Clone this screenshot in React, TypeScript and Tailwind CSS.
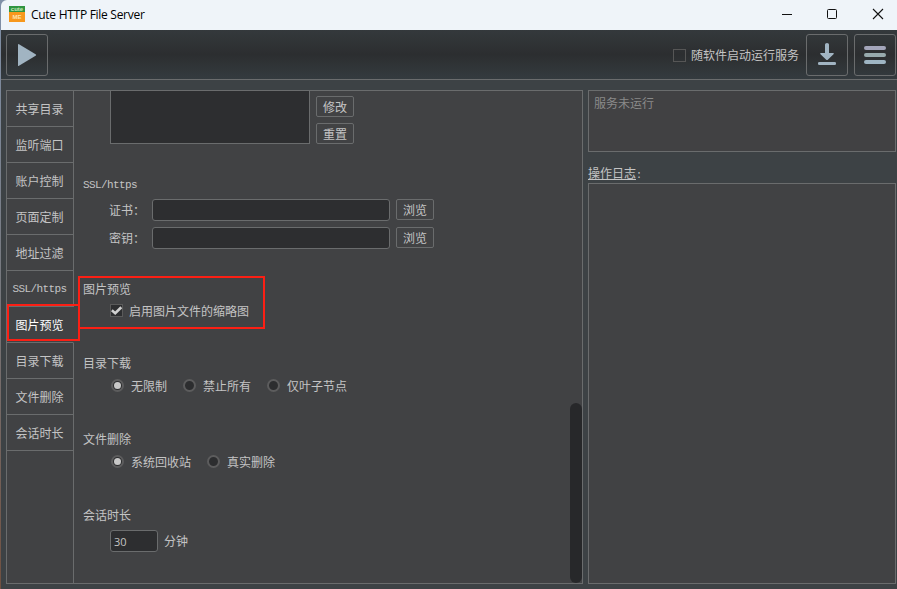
import { useState, type ReactNode } from 'react';
import clsx from 'clsx';

const TABS = [
  '共享目录',
  '监听端口',
  '账户控制',
  '页面定制',
  '地址过滤',
  'SSL/https',
  '图片预览',
  '目录下载',
  '文件删除',
  '会话时长',
];

function AppLogo() {
  return (
    <span className="flex h-4 w-4 flex-col overflow-hidden text-center font-['Liberation_Sans'] text-[6px] font-bold leading-[6px]">
      <span className="h-[6px] bg-[#2f9440] text-[#c5e8b8]">cute</span>
      <span className="h-[10px] bg-[#f7981d] leading-[11px] text-[#fbe3b0]">ME</span>
    </span>
  );
}

function TitleBar() {
  return (
    <header className="flex h-[30px] shrink-0 items-center rounded-tl-[6px] bg-[#eff4f9] pl-2 text-black">
      <div className="-mt-0.5">
        <AppLogo />
      </div>
      <h1 className="ml-[6px] flex-1 font-['Open_Sans'] text-[12px] leading-[30px] tracking-[-0.28px]">
        Cute HTTP File Server
      </h1>
      <svg width="115" height="30" viewBox="0 0 115 30" fill="none" stroke="#111">
        <path d="M0 14.5h10" />
        <rect x="45.5" y="9.5" width="9" height="9" rx="1" />
        <path d="M91 9l10 10M101 9l-10 10" strokeWidth="1.1" />
      </svg>
    </header>
  );
}

function ToolButton({ children }: { children: ReactNode }) {
  return (
    <button className="flex h-[42px] w-[42px] items-center justify-center rounded-[3px] border border-[#6a6c6d]">
      {children}
    </button>
  );
}

function Toolbar() {
  return (
    <div className="flex h-[50px] shrink-0 items-start border-b border-[#6a6c6d] bg-linear-to-b from-[#34393c] via-[#2c2e30] to-[#343b3f] pt-1 pl-[5px] pr-px">
      <ToolButton>
        <svg width="40" height="40" viewBox="0 0 40 40" fill="#a1b4c2">
          <path d="M11 9.600q0-1 1-.4L28.600 19.200q1.200.8 0 1.600L12 30.800q-1 .6-1-.4z" />
        </svg>
      </ToolButton>
      <label className="ml-auto mr-[7px] flex h-[42px] items-center gap-[5px]">
        <span className="h-[13px] w-[13px] border border-[#565656]" />
        <span>随软件启动运行服务</span>
      </label>
      <ToolButton>
        <svg width="40" height="40" viewBox="0 0 40 40" fill="#a1b4c2">
          <path d="M18 9.500q0-1.500 2-1.500t2 1.500V18h4.200q1.300.2.300 1.200l-5.700 5.500q-.8.700-1.600 0l-5.700-5.500q-1-1 .3-1.200H18z" />
          <rect x="11" y="27" width="18" height="3" rx="1.300" />
        </svg>
      </ToolButton>
      <div className="w-[6px]" />
      <ToolButton>
        <svg width="40" height="40" viewBox="0 0 40 40">
          <rect x="9" y="11" width="22" height="4" rx="2" fill="#a3a5ba" />
          <rect x="9" y="18" width="22" height="4" rx="2" fill="#97aaad" />
          <rect x="9" y="25" width="22" height="4" rx="2" fill="#9eb5c3" />
        </svg>
      </ToolButton>
    </div>
  );
}

function Sidebar({ active, onSelect }: { active: string; onSelect: (tab: string) => void }) {
  return (
    <nav className="flex w-[67px] shrink-0 flex-col">
      {TABS.map((tab) => (
        <button
          key={tab}
          onClick={() => onSelect(tab)}
          className={clsx(
            'h-9 shrink-0 border-b border-r border-b-[#6a6c6d] pr-px',
            tab === active ? 'border-r-transparent text-white' : 'border-r-[#6a6c6d]',
            tab === 'SSL/https' && "pt-[2px] font-['Liberation_Mono'] text-[11px] tracking-[-0.6px]",
          )}
        >
          {tab}
        </button>
      ))}
      <div className="flex-1 border-r border-[#6a6c6d]" />
    </nav>
  );
}

function SmallButton({ children }: { children: ReactNode }) {
  return (
    <button className="h-[21px] w-[38px] rounded-[2px] border border-[#6a6c6d] leading-[19px]">
      {children}
    </button>
  );
}

function Radio({ label, checked = false }: { label: string; checked?: boolean }) {
  return (
    <label className="flex h-[15px] items-center gap-[7px]">
      <span className="flex h-[13px] w-[13px] items-center justify-center rounded-full border-2 border-[#5c5c5d] bg-[#2c2d2f]">
        {checked && <span className="h-[7px] w-[7px] rounded-full bg-[#c8c8c8]" />}
      </span>
      <span>{label}</span>
    </label>
  );
}

function FileField({ label }: { label: string }) {
  return (
    <div className="flex h-[22px] items-start">
      <span className="w-[43px] leading-[22px]">{label}：</span>
      <input className="mr-[6px] h-[22px] w-[238px] rounded-[3px] border border-[#6a6c6d] bg-[#2d2e30]" />
      <SmallButton>浏览</SmallButton>
    </div>
  );
}

function Section({ title, className, children }: { title: string; className?: string; children: ReactNode }) {
  return (
    <section className={clsx('pl-[9px]', className)}>
      <h2 className="h-4 leading-4">{title}</h2>
      <div className="pl-[26px]">{children}</div>
    </section>
  );
}

function Settings() {
  return (
    <div className="relative min-w-0 flex-1">
      <div className="flex items-start gap-[6px] pl-9">
        <div className="h-[53px] w-[200px] border border-t-0 border-[#6a6c6d] bg-[#2d2e30]" />
        <div className="flex flex-col gap-[6px] pt-[5px]">
          <SmallButton>修改</SmallButton>
          <SmallButton>重置</SmallButton>
        </div>
      </div>

      <section className="mt-[33px] pl-[9px]">
        <h2 className="h-4 font-['Liberation_Mono'] text-[11px] leading-4 tracking-[-0.6px]">SSL/https</h2>
        <div className="mt-[6px] flex flex-col gap-[6px] pl-[26px]">
          <FileField label="证书" />
          <FileField label="密钥" />
        </div>
      </section>

      <Section title="图片预览" className="mt-[32px]">
        <label className="mt-[6px] flex h-4 items-center gap-[6px] pl-px">
          <span className="-mt-px h-[13px] w-[13px] border border-[#5a5a5a] bg-[#2d2e30]">
            <svg width="11" height="11" viewBox="0 0 11 11" fill="none" stroke="#d0d0d0" strokeWidth="2.6">
              <path d="M.8 5.300l3.400 3L10.300 2.300" />
            </svg>
          </span>
          <span>启用图片文件的缩略图</span>
        </label>
      </Section>

      <Section title="目录下载" className="mt-[36px]">
        <div className="mt-[7px] flex h-4 gap-[16px] pl-[2px]">
          <Radio label="无限制" checked />
          <Radio label="禁止所有" />
          <Radio label="仅叶子节点" />
        </div>
      </Section>

      <Section title="文件删除" className="mt-[37px]">
        <div className="mt-[7px] flex h-4 gap-[16px] pl-[2px]">
          <Radio label="系统回收站" checked />
          <Radio label="真实删除" />
        </div>
      </Section>

      <Section title="会话时长" className="mt-[37px]">
        <div className="mt-[7px] flex items-center gap-[6px] pl-px">
          <input
            defaultValue="30"
            className="h-[22px] w-[48px] rounded-[3px] border border-[#6a6c6d] bg-[#2d2e30] pl-[3px] font-['Open_Sans'] text-[11px]"
          />
          <span>分钟</span>
        </div>
      </Section>

      <div className="absolute bottom-0 right-0 h-[180px] w-3 rounded-full bg-[#27282a]" />
    </div>
  );
}

function StatusColumn() {
  return (
    <aside className="flex w-[308px] shrink-0 flex-col">
      <div className="h-[62px] border border-[#6a6c6d] bg-[#414143] px-[5px] pt-[4px] leading-4 text-[#8a8a8a]">
        服务未运行
      </div>
      <div className="mt-[13px] h-[18px] leading-4">
        <span className="inline-block h-[15px] border-b border-current">操作日志</span>
        <span className="font-['Liberation_Mono'] text-[10px]">:</span>
      </div>
      <div className="flex-1 border border-[#6a6c6d] bg-[#414244]" />
    </aside>
  );
}

export default function App() {
  const [active, setActive] = useState('图片预览');

  return (
    <div className="relative h-[589px] w-[897px] overflow-hidden bg-linear-to-b from-[#8090a8] via-[#76777c] to-[#705040] pl-px font-['Noto_Sans_CJK_SC',sans-serif] text-[12px] text-[#c4c4c4]">
      <div className="flex h-full flex-col">
        <TitleBar />
        <Toolbar />
        <main className="flex min-h-0 flex-1 gap-[5px] bg-[#3d4245] pb-[5px] pl-[5px] pr-px pt-[10px]">
          <div className="flex min-w-0 flex-1 border border-[#6a6c6d] bg-[#414244]">
            <Sidebar active={active} onSelect={setActive} />
            <Settings />
          </div>
          <StatusColumn />
        </main>
      </div>

      {/* highlight frames over the active tab and its section */}
      <div className="pointer-events-none absolute left-[7px] top-[304px] h-[37px] w-[73px] border-2 border-[#fb1f14]" />
      <div className="pointer-events-none absolute left-[78px] top-[276px] h-[53px] w-[187px] border-2 border-[#fb1f14]" />
    </div>
  );
}
